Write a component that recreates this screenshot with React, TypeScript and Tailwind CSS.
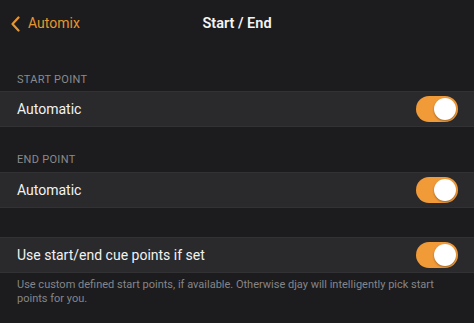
import React from "react";

function Toggle() {
  return (
    <div className="w-[42px] h-[26px] rounded-full bg-[#f19a38] flex items-center justify-end px-[2px] shrink-0">
      <div className="w-[22px] h-[22px] rounded-full bg-white shadow-[0_1px_2px_rgba(0,0,0,0.35)]" />
    </div>
  );
}

function Row({ label }: { label: string }) {
  return (
    <div className="h-[36px] bg-[#2a2a2c] border-y border-[#323234] flex items-center justify-between pl-[17px] pr-[16px]">
      <span className="text-[14px] text-[#f2f2f2]">{label}</span>
      <Toggle />
    </div>
  );
}

export default function App() {
  return (
    <div
      className="w-[474px] h-[323px] bg-[#1c1c1e] overflow-hidden flex flex-col"
      style={{ fontFamily: "Roboto, 'Noto Sans', 'Liberation Sans', sans-serif" }}
    >
      <div className="h-[45px] pt-[2px] relative flex items-center justify-center">
        <div className="absolute left-[10px] top-0 h-[45px] pt-[2px] flex items-center gap-[7px] text-[#e7962f]">
          <svg width="11" height="16" viewBox="0 0 11 16" fill="none">
            <path d="M8.5 1.5 L2.5 8 L8.5 14.5" stroke="#e7962f" strokeWidth="2.2" strokeLinecap="round" strokeLinejoin="round" />
          </svg>
          <span className="text-[14px]">Automix</span>
        </div>
        <span className="text-[14.5px] font-semibold text-[#f4f4f4]">Start / End</span>
      </div>
      <div className="h-[46px] flex items-end pl-[17px] pb-[3px]">
        <span className="text-[11px] tracking-[0.3px] text-[#8a8a8e] uppercase">Start Point</span>
      </div>
      <Row label="Automatic" />
      <div className="h-[45px] flex items-end pl-[17px] pb-[4px]">
        <span className="text-[11px] tracking-[0.3px] text-[#8a8a8e] uppercase">End Point</span>
      </div>
      <Row label="Automatic" />
      <div className="h-[29px]" />
      <Row label="Use start/end cue points if set" />
      <div className="pl-[17px] pr-[20px] pt-[5px] text-[11px] leading-[14px] text-[#858589]">
        Use custom defined start points, if available. Otherwise djay will intelligently pick start points for you.
      </div>
    </div>
  );
}
